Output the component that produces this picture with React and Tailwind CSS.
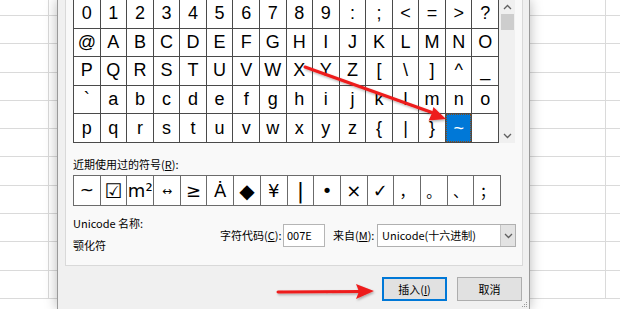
import React from "react";

const gridRows = [
  ["0", "1", "2", "3", "4", "5", "6", "7", "8", "9", ":", ";", "<", "=", ">", "?"],
  ["@", "A", "B", "C", "D", "E", "F", "G", "H", "I", "J", "K", "L", "M", "N", "O"],
  ["P", "Q", "R", "S", "T", "U", "V", "W", "X", "Y", "Z", "[", "\\", "]", "^", "_"],
  ["`", "a", "b", "c", "d", "e", "f", "g", "h", "i", "j", "k", "l", "m", "n", "o"],
  ["p", "q", "r", "s", "t", "u", "v", "w", "x", "y", "z", "{", "|", "}", "~", ""],
];

const recent = [
  { c: "~", cls: "text-[17px]" },
  { c: "☑", cls: "text-[20px]" },
  { c: "m²", cls: "text-[18px]" },
  { c: "↔", cls: "text-[12px]" },
  { c: "≥", cls: "text-[18px]" },
  { c: "Ȧ", cls: "text-[18px]" },
  { c: "◆", cls: "text-[20px]" },
  { c: "¥", cls: "text-[18px]" },
  { c: "|", cls: "text-[22px]" },
  { c: "•", cls: "text-[18px]" },
  { c: "×", cls: "text-[18px]" },
  { c: "✓", cls: "text-[18px]" },
  { c: "，", cls: "text-[15px] font-['Noto_Sans_CJK_SC']" },
  { c: "。", cls: "text-[15px] font-['Noto_Sans_CJK_SC']" },
  { c: "、", cls: "text-[15px] font-['Noto_Sans_CJK_SC']" },
  { c: "；", cls: "text-[15px] font-['Noto_Sans_CJK_SC']" },
];

function Sheet({ first, className }) {
  const lines = Array.from({ length: 10 });
  return (
    <div className={className}>
      <div className="flex h-[16px] border-b border-[#dadada]">
        <div className={first + " border-r border-[#dadada]"} />
        <div className="flex-1" />
      </div>
      {lines.map((_, i) => (
        <div key={i} className="flex h-[28.3px] border-b border-[#dadada]">
          <div className={first + " border-r border-[#dadada]"} />
          <div className="flex-1" />
        </div>
      ))}
    </div>
  );
}

function Chevron({ up }) {
  return (
    <svg width="9" height="6" viewBox="0 0 9 6">
      <path
        d={up ? "M1 5 L4.5 1.5 L8 5" : "M1 1 L4.5 4.5 L8 1"}
        fill="none"
        stroke="#606060"
        strokeWidth="1.3"
      />
    </svg>
  );
}

function SymbolGrid() {
  return (
    <div className="flex h-[143px]">
      <div className="grid h-[143px] w-[426px] grid-cols-16 grid-rows-5 gap-px bg-[#4a4a4a] px-px pb-px font-['Liberation_Sans',sans-serif] text-[18px] text-black">
        {gridRows.map((row, r) =>
          row.map((ch, c) => {
            const selected = r === 4 && c === 14;
            return (
              <div
                key={r + "-" + c}
                className={
                  selected
                    ? "flex items-center justify-center bg-[#0078d7] text-white outline-1 -outline-offset-1 outline-dotted outline-[#8a4b12]"
                    : "flex items-center justify-center bg-white"
                }
              >
                {ch}
              </div>
            );
          })
        )}
      </div>
      <div className="flex w-[16px] flex-col items-center bg-[#f0f0f0]">
        <div className="flex h-[14px] items-center">
          <Chevron up />
        </div>
        <div className="h-[16px] w-[13px] bg-[#cdcdcd]" />
        <div className="flex-1" />
        <div className="flex h-[14px] items-center">
          <Chevron />
        </div>
      </div>
    </div>
  );
}

function RecentRow() {
  return (
    <div className="grid h-[31px] w-[428px] grid-cols-16 grid-rows-[29px] gap-px overflow-hidden border border-[#6b6b6b] bg-[#6b6b6b] font-['DejaVu_Sans',sans-serif] leading-none text-black">
      {recent.map((r, i) => (
        <div key={i} className={"flex h-[29px] items-center justify-center overflow-hidden bg-white " + r.cls}>
          {r.c}
        </div>
      ))}
    </div>
  );
}

export default function App() {
  return (
    <div className="relative flex h-[309px] w-[620px] overflow-hidden bg-white font-['Noto_Sans_CJK_SC',sans-serif] text-[11px] text-black">
      <Sheet first="w-[49px]" className="w-[57px] shrink-0" />

      <div className="relative z-10 flex h-[309px] w-[473px] shrink-0 flex-col border-x border-[#9a9a9a] bg-[#f0f0f0] pl-[7px] pr-[6px] shadow-[0_0_12px_rgba(0,0,0,0.28)]">
        <div className="flex h-[266px] flex-col border-x border-b border-[#d9d9d9] bg-[#f9f9f9] pl-[7px]">
          <SymbolGrid />

          <div className="mt-[13px] h-[16px] leading-[16px]">
            近期使用过的符号(<span className="underline">R</span>):
          </div>
          <div className="mt-[3px]">
            <RecentRow />
          </div>

          <div className="mt-[9px] flex items-start">
            <div className="flex w-[147px] flex-col gap-[6px] leading-[16px]">
              <div>Unicode 名称:</div>
              <div>颚化符</div>
            </div>
            <div className="mt-[9px] flex h-[23px] items-center">
              <span className="w-[63px]">
                字符代码(<span className="underline">C</span>):
              </span>
              <div className="flex h-[23px] w-[42px] items-center border border-[#b5b5b5] bg-white pl-[3px]">
                007E
              </div>
              <span className="ml-[8px] w-[44px]">
                来自(<span className="underline">M</span>):
              </span>
              <div className="flex h-[23px] w-[139px] items-center border border-[#b0b0b0] bg-white">
                <span className="flex-1 pl-[4px]">Unicode(十六进制)</span>
                <div className="flex h-full w-[15px] items-center justify-center border-l border-[#c4c4c4] bg-[#e3e3e3]">
                  <Chevron />
                </div>
              </div>
            </div>
          </div>
        </div>

        <div className="mt-[11px] flex justify-end gap-[10px] pr-px">
          <button className="flex h-[24px] w-[65px] items-center justify-center border border-[#0078d7] bg-[#e1e1e1] text-[11px] shadow-[inset_0_0_0_1px_#0078d7]">
            插入(<span className="underline">I</span>)
          </button>
          <button className="flex h-[24px] w-[65px] items-center justify-center border border-[#adadad] bg-[#e1e1e1] text-[11px]">
            取消
          </button>
        </div>

        <svg className="absolute bottom-[1px] right-[1px]" width="8" height="8" viewBox="0 0 8 8">
          <rect x="6" y="2" width="1" height="1" fill="#9a9a9a" />
          <rect x="4" y="4" width="1" height="1" fill="#9a9a9a" />
          <rect x="6" y="4" width="1" height="1" fill="#9a9a9a" />
          <rect x="2" y="6" width="1" height="1" fill="#9a9a9a" />
          <rect x="4" y="6" width="1" height="1" fill="#9a9a9a" />
          <rect x="6" y="6" width="1" height="1" fill="#9a9a9a" />
        </svg>
      </div>

      <Sheet first="w-[76px]" className="flex-1" />

      <svg
        className="pointer-events-none absolute left-0 top-0 z-20"
        width="620"
        height="309"
        viewBox="0 0 620 309"
      >
        <defs>
          <filter id="sh" x="-10%" y="-10%" width="120%" height="130%">
            <feDropShadow dx="1" dy="1.5" stdDeviation="1" floodColor="#000" floodOpacity="0.3" />
          </filter>
        </defs>
        <g filter="url(#sh)" fill="#ee1c1c" stroke="none">
          <path d="M305 67 L432 112.5" stroke="#ee1c1c" strokeWidth="3" strokeLinecap="round" />
          <path d="M446 119 L433.4 107 L432 113 L428.6 120.5 Z" />
          <path d="M278 292 L360 291.5" stroke="#ee1c1c" strokeWidth="3" strokeLinecap="round" />
          <path d="M374 291 L356 284 L359 291.5 L356 299 Z" />
        </g>
      </svg>
    </div>
  );
}
